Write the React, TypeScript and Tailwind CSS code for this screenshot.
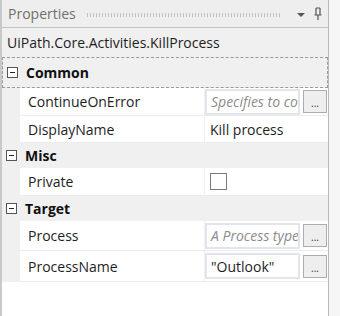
import React from "react";

const font = { fontFamily: '"Open Sans", "Noto Sans", sans-serif' };

function Minus() {
  return (
    <div className="w-[11px] h-[11px] border border-[#555] bg-white flex items-center justify-center shrink-0">
      <div className="w-[5px] h-[1px] bg-[#222]" />
    </div>
  );
}

function Category({ label, h, selected }: { label: string; h: string; selected?: boolean }) {
  return (
    <div
      className={`flex items-center bg-[#f0f0f0] pl-[4px] ${h} ${selected ? "border border-dashed border-[#9a9a9a]" : ""}`}
    >
      <Minus />
      <span className="ml-[8px] text-[14px] font-bold text-[#111]">{label}</span>
    </div>
  );
}

function Row({ name, h, children }: { name: string; h: string; children?: React.ReactNode }) {
  return (
    <div className={`flex ${h} bg-[#f0f0f0]`}>
      <div className="w-[18px] shrink-0" />
      <div className="flex flex-1 min-w-0 bg-white border-b border-[#ececec]">
        <div className="w-[185px] shrink-0 flex items-center pl-[8px] text-[14px] text-[#1e1e1e] border-r border-[#f0f0f0]">
          {name}
        </div>
        <div className="flex-1 min-w-0 flex items-center">{children}</div>
      </div>
    </div>
  );
}

function Box({ text, italic }: { text: string; italic?: boolean }) {
  return (
    <div className="flex items-center gap-[3px] w-full min-w-0 pr-[1px]">
      <div
        className={`h-[26px] flex-1 min-w-0 border-2 border-[#e1e6ec] flex items-center pl-[4px] overflow-hidden whitespace-nowrap text-[14px] ${
          italic ? "italic text-[#8c8c8c]" : "text-[#1e1e1e]"
        }`}
      >
        {text}
      </div>
      <div className="w-[24px] h-[23px] shrink-0 border border-[#adadad] bg-[#eeeeee] flex items-end justify-center pb-[4px] text-[10px] leading-none text-[#333]">
        ...
      </div>
    </div>
  );
}

export default function App() {
  return (
    <div className="w-[340px] h-[316px] bg-[#f6f6f6] flex overflow-hidden" style={font}>
      <div className="w-[329px] h-full flex flex-col bg-white border-r border-[#b9b9b9] border-l-2 border-l-[#c9c9c9]">
        <div className="h-[27px] shrink-0 bg-[#eeeeee] flex items-center pl-[6px] pr-[6px]">
          <span className="text-[14px] text-[#707070]">Properties</span>
          <div className="flex-1 ml-[10px] mr-[14px] h-[4px] mt-[2px] bg-[radial-gradient(#c2c2c2_0.8px,transparent_0.9px)] bg-[length:3px_2px]" />
          <svg width="10" height="6" viewBox="0 0 10 6" className="mr-[8px] mt-[3px]">
            <path d="M1 1h8L5 5z" fill="#555" />
          </svg>
          <svg width="8" height="13" viewBox="0 0 8 13">
            <path d="M2 1h4M2 1v7M6 1v7M0.5 8h7M4 8v5" stroke="#555" strokeWidth="1.2" fill="none" />
          </svg>
        </div>
        <div className="h-[30px] shrink-0 bg-[#f0f0f0] border-t border-[#c4c4c4] flex items-center pl-[5px] text-[14px] text-[#1e1e1e]">
          UiPath.Core.Activities.KillProcess
        </div>
        <Category label="Common" h="h-[31px]" selected />
        <Row name="ContinueOnError" h="h-[28px]">
          <Box text="Specifies to continue" italic />
        </Row>
        <Row name="DisplayName" h="h-[27px]">
          <span className="pl-[5px] text-[14px] text-[#1e1e1e]">Kill process</span>
        </Row>
        <Category label="Misc" h="h-[25px]" />
        <Row name="Private" h="h-[28px]">
          <div className="ml-[5px] w-[17px] h-[17px] border border-[#7a7a7a] bg-white" />
        </Row>
        <Category label="Target" h="h-[25px]" />
        <Row name="Process" h="h-[30px]">
          <Box text="A Process type variable" italic />
        </Row>
        <Row name="ProcessName" h="h-[31px]">
          <Box text={'"Outlook"'} />
        </Row>
        <div className="flex-1 bg-white" />
      </div>
    </div>
  );
}
